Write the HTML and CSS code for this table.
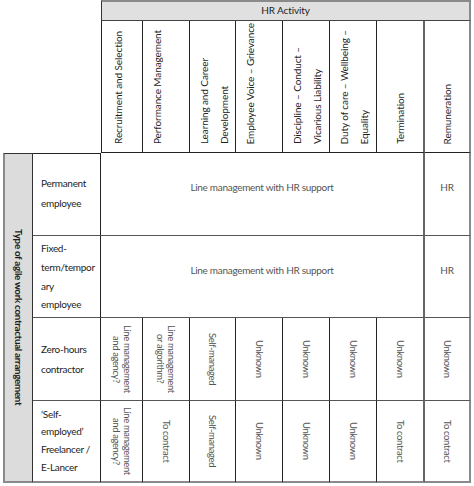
FILE: index.html
```html
<!DOCTYPE html>
<html>
<head>
<meta charset="utf-8">
<link rel="stylesheet" href="styles.css">
</head>
<body>
<div class="grid">
  <div class="corner"></div>
  <div class="hr-band">HR Activity</div>

  <div class="colhead first"><span class="vt">Recruitment and Selection</span></div>
  <div class="colhead"><span class="vt">Performance Management</span></div>
  <div class="colhead"><span class="vt">Learning and Career<br>Development</span></div>
  <div class="colhead"><span class="vt">Employee Voice – Grievance</span></div>
  <div class="colhead"><span class="vt">Discipline – Conduct –<br>Vicarious Liability</span></div>
  <div class="colhead"><span class="vt">Duty of care – Wellbeing –<br>Equality</span></div>
  <div class="colhead mid sep"><span class="vt">Termination</span></div>
  <div class="colhead mid last"><span class="vt">Remuneration</span></div>

  <div class="side"><span class="side-text">Type of agile work contractual arrangement</span></div>

  <div class="rowlabel top">Permanent<br>employee</div>
  <div class="merged sep">Line management with HR support</div>
  <div class="cell hr last">HR</div>

  <div class="rowlabel tight">Fixed-<br>term/tempor<br>ary<br>employee</div>
  <div class="merged sep">Line management with HR support</div>
  <div class="cell hr last">HR</div>

  <div class="rowlabel">Zero-hours<br>contractor</div>
  <div class="cell"><span class="vb">Line management<br>and agency?</span></div>
  <div class="cell"><span class="vb">Line management<br>or algorithm?</span></div>
  <div class="cell"><span class="vb">Self-managed</span></div>
  <div class="cell"><span class="vb">Unknown</span></div>
  <div class="cell"><span class="vb">Unknown</span></div>
  <div class="cell"><span class="vb">Unknown</span></div>
  <div class="cell sep"><span class="vb">Unknown</span></div>
  <div class="cell last"><span class="vb">Unknown</span></div>

  <div class="rowlabel bottom tight2">‘Self-<br>employed’<br>Freelancer /<br>E-Lancer</div>
  <div class="cell bottom"><span class="vb">Line management<br>and agency?</span></div>
  <div class="cell bottom"><span class="vb">To contract</span></div>
  <div class="cell bottom"><span class="vb">Self-managed</span></div>
  <div class="cell bottom"><span class="vb">Unknown</span></div>
  <div class="cell bottom"><span class="vb">Unknown</span></div>
  <div class="cell bottom"><span class="vb">Unknown</span></div>
  <div class="cell bottom sep"><span class="vb">To contract</span></div>
  <div class="cell bottom last"><span class="vb">To contract</span></div>
</div>
</body>
</html>
```
FILE: styles.css
```css
html, body {
  margin: 0;
  padding: 0;
  background: #ffffff;
}
body {
  font-family: Lato, "Open Sans", sans-serif;
  color: #1e1e1e;
}
.grid {
  display: grid;
  margin-left: 3px;
  width: 468px;
  grid-template-columns: 30px 68px 42px 47px 46px 47px 47px 47px 48px 46px;
  grid-template-rows: 21px 132px 83px 82px 83px 82px;
}
.grid > div {
  box-sizing: border-box;
}
.corner {
  grid-column: span 2;
  grid-row: span 2;
}
.hr-band {
  grid-column: span 8;
  background: #e0e0e0;
  border-top: 2px solid #8a8a8a;
  border-right: 2px solid #8a8a8a;
  border-left: 1px solid #333;
  border-bottom: 1px solid #444;
  font-size: 10px;
  letter-spacing: -0.1px;
  display: flex;
  align-items: center;
  justify-content: center;
  padding-bottom: 2px;
}
.colhead {
  border-right: 1px solid #222;
  border-bottom: 1px solid #222;
  display: flex;
  align-items: flex-end;
  justify-content: flex-start;
  padding: 0 0 8px 4px;
  font-size: 10px;
  letter-spacing: -0.1px;
}
.colhead.first {
  border-left: 1px solid #222;
  padding-left: 6px;
}
.colhead.mid {
  justify-content: center;
  padding-left: 0;
}
.vt {
  writing-mode: vertical-rl;
  transform: rotate(180deg);
  line-height: 20px;
  white-space: nowrap;
}
.side {
  grid-column: 1;
  grid-row: 3 / 7;
  background: #dcdcdc;
  border-left: 2px solid #8a8a8a;
  border-bottom: 2px solid #8a8a8a;
  border-top: 1px solid #333;
  border-right: 1px solid #333;
  display: flex;
  align-items: center;
  justify-content: center;
}
.side-text {
  writing-mode: vertical-rl;
  font-weight: bold;
  font-size: 9.8px;
  letter-spacing: -0.3px;
  white-space: nowrap;
}
.rowlabel {
  border-right: 1px solid #222;
  border-bottom: 1px solid #555;
  display: flex;
  flex-direction: column;
  justify-content: center;
  padding-left: 8px;
  font-size: 10px;
  letter-spacing: -0.3px;
  line-height: 20px;
}
.rowlabel.top {
  border-top: 1px solid #222;
  padding-bottom: 4px;
}
.rowlabel.tight {
  line-height: 18.7px;
}
.rowlabel.tight2 {
  line-height: 17.7px;
}
.merged {
  grid-column: span 7;
  border-bottom: 1px solid #555;
  display: flex;
  align-items: center;
  justify-content: center;
  padding-bottom: 14px;
  font-size: 10px;
  letter-spacing: -0.3px;
  color: #555;
}
.cell {
  border-right: 1px solid #222;
  border-bottom: 1px solid #555;
  display: flex;
  align-items: center;
  justify-content: center;
  font-size: 10px;
  letter-spacing: -0.25px;
  color: #555;
}
.cell.hr {
  padding-bottom: 14px;
}
.vb {
  writing-mode: vertical-rl;
  font-size: 9.5px;
  letter-spacing: -0.4px;
  line-height: 11px;
  white-space: nowrap;
  text-align: center;
}
.sep {
  border-right: 2px solid #666 !important;
}
.last {
  border-right: 2px solid #8a8a8a !important;
}
.bottom {
  border-bottom: 2px solid #8a8a8a !important;
}
```
